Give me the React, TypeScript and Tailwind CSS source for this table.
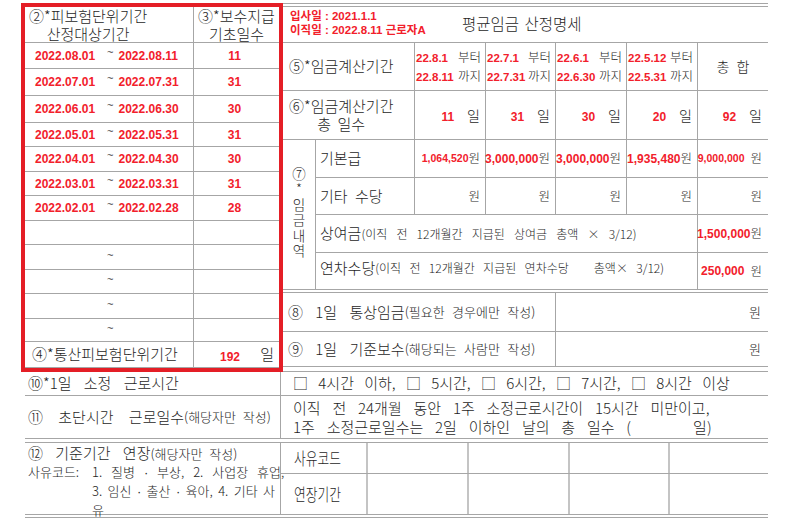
import React from "react";

const B = "border-[#a6a6a6]";
const RED =
  "text-[#f2202b] font-bold font-['Liberation_Sans','Noto_Sans_CJK_KR',sans-serif]";
const DOT = "font-['Liberation_Sans',sans-serif]";

type Row = { a?: string; b?: string; n?: string; h: string; tilde?: boolean };

const rows: Row[] = [
  { a: "2022.08.01", b: "2022.08.11", n: "11", h: "h-[26px]" },
  { a: "2022.07.01", b: "2022.07.31", n: "31", h: "h-[27px]" },
  { a: "2022.06.01", b: "2022.06.30", n: "30", h: "h-[27px]" },
  { a: "2022.05.01", b: "2022.05.31", n: "31", h: "h-[24px]" },
  { a: "2022.04.01", b: "2022.04.30", n: "30", h: "h-[25px]" },
  { a: "2022.03.01", b: "2022.03.31", n: "31", h: "h-[24px]" },
  { a: "2022.02.01", b: "2022.02.28", n: "28", h: "h-[25px]" },
  { h: "h-[24px]" },
  { tilde: true, h: "h-[25px]" },
  { tilde: true, h: "h-[24px]" },
  { tilde: true, h: "h-[25px]" },
  { tilde: true, h: "h-[23px]" },
];

function Tilde({ className = "" }: { className?: string }) {
  return (
    <span
      className={`text-[11px] leading-none text-[#444] font-['Liberation_Sans',sans-serif] ${className}`}
    >
      ~
    </span>
  );
}

function LeftPanel() {
  return (
    <div className="w-[262px] h-[369px] border-4 border-[#e41e26] flex flex-col shrink-0">
      <div className={`flex h-[36px] border-b ${B} shrink-0`}>
        <div className="w-[168px] flex items-center pl-[4px]">
          <div className="text-center text-[15px] leading-[18px]">
            ②*피보험단위기간
            <br />
            산정대상기간
          </div>
        </div>
        <div
          className={`flex-1 border-l ${B} flex items-center justify-center`}
        >
          <div className="text-center text-[15px] leading-[18px]">
            ③*보수지급
            <br />
            기초일수
          </div>
        </div>
      </div>
      {rows.map((r, i) => (
        <div key={i} className={`flex ${r.h} border-b ${B} shrink-0`}>
          <div className="w-[168px] flex items-center pl-[10px]">
            {r.a ? (
              <>
                <span className={`${RED} text-[12px]`}>{r.a}</span>
                <Tilde className="ml-[12px] mb-[7px]" />
                <span className={`${RED} text-[12px] ml-[5px]`}>{r.b}</span>
              </>
            ) : r.tilde ? (
              <Tilde className="ml-[72px] mb-[4px]" />
            ) : null}
          </div>
          <div
            className={`flex-1 border-l ${B} flex items-center justify-center pr-[4px] ${RED} text-[12px]`}
          >
            {r.n}
          </div>
        </div>
      ))}
      <div className={`flex h-[26px] border-b ${B} shrink-0`}>
        <div className="w-[168px] flex items-center pl-[7px] text-[15px]">
          ④*통산피보험단위기간
        </div>
        <div className={`flex-1 border-l ${B} flex items-center pl-[26px] pr-[5px]`}>
          <span className={`${RED} text-[12px] mt-[4px]`}>192</span>
          <span className="ml-auto text-[15px]">일</span>
        </div>
      </div>
    </div>
  );
}

function Period({ a, b }: { a: string; b: string }) {
  return (
    <div
      className={`border-l border-b ${B} flex flex-col justify-center pl-[1px] pr-[4px] leading-[17px] whitespace-nowrap`}
    >
      <div className="flex justify-between items-baseline">
        <span className={`${RED} text-[11.5px]`}>{a}</span>
        <span className="text-[12.5px]">부터</span>
      </div>
      <div className="flex justify-between items-baseline">
        <span className={`${RED} text-[11.5px]`}>{b}</span>
        <span className="text-[12.5px]">까지</span>
      </div>
    </div>
  );
}

function Days({ n, last }: { n: string; last?: boolean }) {
  return (
    <div
      className={`border-l border-b ${B} flex items-center justify-end gap-[13px] ${last ? "pr-[6px]" : "pr-[5px]"}`}
    >
      <span className={`${RED} text-[12px] mt-[4px]`}>{n}</span>
      <span className="text-[14px]">일</span>
    </div>
  );
}

function Won({ n, sm, gap, last }: { n?: string; sm?: boolean; gap?: boolean; last?: boolean }) {
  return (
    <div
      className={`border-l border-b ${B} flex items-center justify-end whitespace-nowrap ${last ? "pr-[6px]" : "pr-[5px]"}`}
    >
      {n && (
        <span className={`${RED} ${sm ? "text-[10.5px]" : "text-[12px]"} ${gap ? "mr-[6px]" : ""}`}>
          {n}
        </span>
      )}
      <span className="text-[12.5px]">원</span>
    </div>
  );
}

function RightPanel() {
  return (
    <div className="w-[485px] flex flex-col shrink-0">
      <div className={`h-[3px] border-t ${B}`} />
      <div
        className={`grid grid-cols-[32px_99px_71px_70px_71px_71px_71px] grid-rows-[36px_48px_49px_38px_37px_38px_37px] border-t ${B}`}
      >
        {/* title */}
        <div className={`col-span-7 border-b ${B} flex pl-[7px]`}>
          <div className={`${RED} text-[11.5px] leading-[14px] pt-[2px] w-[172px]`}>
            입사일 : 2021.1.1
            <br />
            이직일 : 2022.8.11 근로자A
          </div>
          <div className="self-center text-[15.5px] pb-[2px] [word-spacing:2px]">평균임금 산정명세</div>
        </div>
        {/* 5 */}
        <div className={`col-span-2 border-b ${B} flex items-center pl-[6px] text-[15px]`}>
          ⑤*임금계산기간
        </div>
        <Period a="22.8.1" b="22.8.11" />
        <Period a="22.7.1" b="22.7.31" />
        <Period a="22.6.1" b="22.6.30" />
        <Period a="22.5.12" b="22.5.31" />
        <div className={`border-l border-b ${B} flex items-center justify-center text-[14px] [word-spacing:4px]`}>
          총 합
        </div>
        {/* 6 */}
        <div className={`col-span-2 border-b ${B} flex items-center pl-[6px]`}>
          <div className="text-center text-[15px] leading-[18px] [word-spacing:3px]">
            ⑥*임금계산기간
            <br />
            총 일수
          </div>
        </div>
        <Days n="11" />
        <Days n="31" />
        <Days n="30" />
        <Days n="20" />
        <Days n="92" last />
        {/* 7 */}
        <div className={`row-span-4 border-b ${B} flex items-center justify-center pb-[2px]`}>
          <span className="[writing-mode:vertical-rl] [text-orientation:upright] text-[13.5px] leading-[16px] tracking-[2px]">
            ⑦*임금내역
          </span>
        </div>
        <div className={`border-l border-b ${B} flex items-center pl-[4px] text-[15px]`}>기본급</div>
        <Won n="1,064,520" sm />
        <Won n="3,000,000" />
        <Won n="3,000,000" />
        <Won n="1,935,480" />
        <Won n="9,000,000" sm gap last />
        <div className={`border-l border-b ${B} flex items-center pl-[4px] text-[15px] [word-spacing:4px]`}>
          기타 수당
        </div>
        <Won />
        <Won />
        <Won />
        <Won />
        <Won last />
        <div className={`col-span-5 border-l border-b ${B} flex items-center pl-[4px] whitespace-nowrap`}>
          <span className="text-[15px]">상여금</span>
          <span className="text-[12px] [word-spacing:6.5px]">(이직 전 12개월간 지급된 상여금 총액 × 3/12)</span>
        </div>
        <Won n="1,500,000" last />
        <div className={`col-span-5 border-l border-b ${B} flex items-center pl-[4px] pb-[6px] whitespace-nowrap`}>
          <span className="text-[15px]">연차수당</span>
          <span className="text-[12px] [word-spacing:5.7px]">(이직 전 12개월간 지급된 연차수당&nbsp;&nbsp; 총액× 3/12)</span>
        </div>
        <Won n="250,000" gap last />
      </div>
      <div className="h-[2px]" />
      <div className={`grid grid-cols-[272px_213px] grid-rows-[39px_35px] border-t ${B}`}>
        <div className={`border-b ${B} flex items-center pl-[5px] whitespace-nowrap`}>
          <span className="text-[15px] [word-spacing:9px]">⑧ 1일 통상임금</span>
          <span className="text-[13px] [word-spacing:4.5px]">(필요한 경우에만 작성)</span>
        </div>
        <div className={`border-l border-b ${B} flex items-center justify-end pr-[7px] text-[13px]`}>원</div>
        <div className={`border-b ${B} flex items-center pl-[5px] whitespace-nowrap`}>
          <span className="text-[15px] [word-spacing:9px]">⑨ 1일 기준보수</span>
          <span className="text-[13px] [word-spacing:4.5px]">(해당되는 사람만 작성)</span>
        </div>
        <div className={`border-l border-b ${B} flex items-center justify-end pr-[7px] text-[13px]`}>원</div>
      </div>
      <div className={`h-[5px] border-b ${B}`} />
    </div>
  );
}

function Bottom() {
  const LB = "border-[#c4c4c4]";
  return (
    <div className="ml-[25px] w-[743px] flex flex-col">
      <div className={`flex h-[24px] border-b ${B}`}>
        <div className="w-[255px] flex items-center pl-[3px] text-[15px] [word-spacing:9px] whitespace-nowrap">⑩*1일 소정 근로시간</div>
        <div className={`flex-1 border-l ${B} flex items-center pl-[12px] text-[15px] [word-spacing:7px] whitespace-nowrap`}>
          □ 4시간 이하, □ 5시간, □ 6시간, □ 7시간, □ 8시간 이상
        </div>
      </div>
      <div className={`flex h-[43px] border-b ${B}`}>
        <div className="w-[255px] flex items-center pl-[3px] whitespace-nowrap">
          <span className="text-[15px] [word-spacing:12px]">⑪ 초단시간 근로일수</span>
          <span className="text-[13px] [word-spacing:4px]">(해당자만 작성)</span>
        </div>
        <div
          className={`flex-1 border-l ${B} flex items-center pl-[12px] text-[15px] leading-[19px] [word-spacing:8.5px] whitespace-nowrap`}
        >
          <div>
            이직 전 24개월 동안 1주 소정근로시간이 15시간 미만이고,
            <br />
            1주 소정근로일수는 2일 이하인 날의 총 일수 (<span className="inline-block w-[62px]" />일)
          </div>
        </div>
      </div>
      <div className="h-[3px]" />
      <div className={`flex h-[73px] border-t border-b ${B}`}>
        <div className="w-[255px] pl-[3px] leading-[18px] whitespace-nowrap">
          <div>
            <span className="text-[15px] [word-spacing:9px]">⑫ 기준기간 연장</span>
            <span className="text-[13px] [word-spacing:4px]">(해당자만 작성)</span>
          </div>
          <div className="flex text-[13px]">
            <div className="w-[64px] shrink-0">사유코드:</div>
            <div className="[word-spacing:2.5px]">
              <span className="[word-spacing:6px]">
                1. 질병 <span className={DOT}>·</span> 부상, 2. 사업장 휴업,
              </span>
              <br />
              3. 임신 <span className={DOT}>·</span> 출산 <span className={DOT}>·</span> 육아, 4. 기타 사
              <br />유
            </div>
          </div>
        </div>
        <div className={`flex-1 border-l ${B} flex flex-col`}>
          <div className={`flex h-[31px] border-b ${B}`}>
            <div className="w-[85px] flex items-center pl-[13px]">
              <span className="text-[17px] scale-x-75 origin-left inline-block whitespace-nowrap">사유코드</span>
            </div>
            <div className={`w-[101px] border-l-2 ${LB}`} />
            <div className={`w-[101px] border-l-2 ${LB}`} />
            <div className={`w-[100px] border-l-2 ${LB}`} />
            <div className={`flex-1 border-l-2 ${LB}`} />
          </div>
          <div className="flex flex-1">
            <div className="w-[85px] flex items-center pl-[13px]">
              <span className="text-[17px] scale-x-75 origin-left inline-block whitespace-nowrap">연장기간</span>
            </div>
            <div className={`w-[101px] border-l-2 ${LB}`} />
            <div className={`w-[101px] border-l-2 ${LB}`} />
            <div className={`w-[100px] border-l-2 ${LB}`} />
            <div className={`flex-1 border-l-2 ${LB}`} />
          </div>
        </div>
      </div>
      <div className={`h-[3px] border-b ${B}`} />
    </div>
  );
}

export default function App() {
  return (
    <div className="w-[800px] h-[521px] bg-white overflow-hidden font-['Noto_Sans_CJK_KR',sans-serif] font-light text-[#1e1e1e]">
      <div className="flex pt-[3px] pl-[21px]">
        <LeftPanel />
        <RightPanel />
      </div>
      <Bottom />
    </div>
  );
}
